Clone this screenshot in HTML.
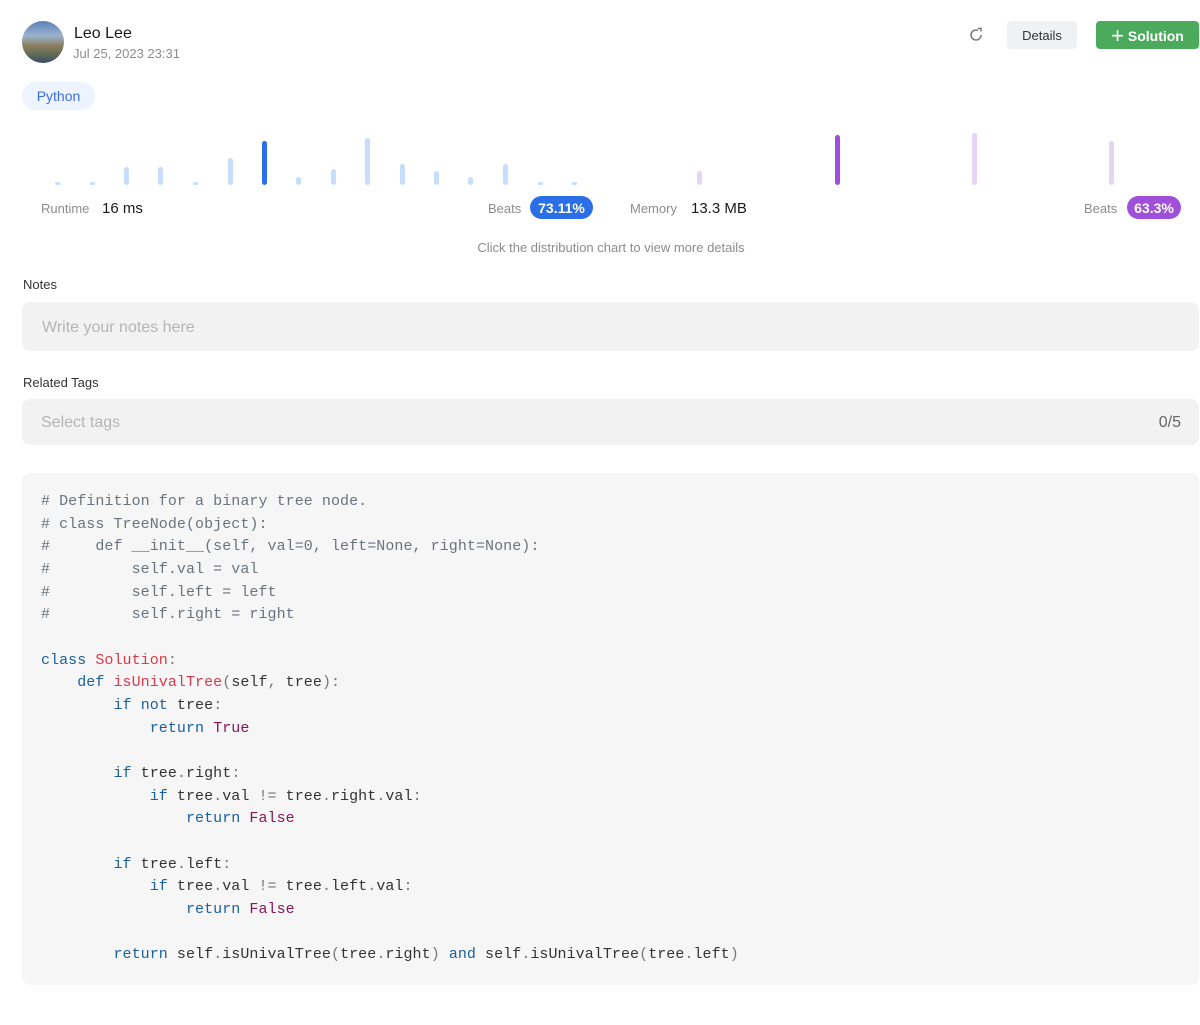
<!DOCTYPE html>
<html><head><meta charset="utf-8"><style>
*{margin:0;padding:0;box-sizing:border-box}
body{width:1200px;height:1025px;background:#fff;font-family:"Liberation Sans",sans-serif;position:relative;overflow:hidden;color:#262626}
.a{position:absolute}
.bar{position:absolute;width:5px;border-radius:3px;bottom:840px}
.rl{background:#c6ddfb}.rd{background:#2b6fe8}.ml{background:#e6d4f5}.md{background:#9f4fd9}
pre{font-family:"Liberation Mono",monospace;font-size:15px;line-height:22.65px;color:#333;letter-spacing:0.06px}
.c{color:#6a737d}.k{color:#1a5f9e}.f{color:#d73a49}.t{color:#8a1657}.p{color:#777}
</style></head><body>
<div class="a" style="left:22px;top:21px;width:42px;height:42px;border-radius:50%;background:linear-gradient(180deg,#5a7fb5 0%,#9bb2cf 35%,#8a7d5c 60%,#5e6b55 80%,#3a4a6a 100%)"></div>
<div class="a" style="left:74px;top:25px;font-size:16px;color:#1a1a1a">Leo Lee</div>
<div class="a" style="left:73px;top:46px;font-size:13px;color:#8c8c8c">Jul 25, 2023 23:31</div>
<div class="a" style="left:22px;top:82px;width:73px;height:28px;border-radius:14px;background:#edf3ff;color:#3b6de6;font-size:14px;line-height:28px;text-align:center">Python</div>
<svg class="a" style="left:968px;top:27px" width="16" height="16" viewBox="0 0 16 16" fill="none" stroke="#777" stroke-width="1.5"><path d="M13 8A5 5 0 1 1 10 3.4"/><path d="M10 1.5h3v3"/></svg>
<div class="a" style="left:1007px;top:21px;width:70px;height:28px;border-radius:4px;background:#f0f1f3;font-size:13px;line-height:29px;text-align:center;color:#333">Details</div>
<div class="a" style="left:1096px;top:21px;width:103px;height:28px;border-radius:4px;background:#4caa5c;font-size:14px;line-height:29px;text-align:center;color:#fff;font-weight:bold"><span style="font-size:22px;font-weight:normal;vertical-align:-2px">+</span> Solution</div>

<div class="bar rl" style="left:55px;height:3px"></div>
<div class="bar rl" style="left:90px;height:3px"></div>
<div class="bar rl" style="left:124px;height:18px"></div>
<div class="bar rl" style="left:158px;height:18px"></div>
<div class="bar rl" style="left:193px;height:3px"></div>
<div class="bar rl" style="left:228px;height:27px"></div>
<div class="bar rd" style="left:262px;height:44px"></div>
<div class="bar rl" style="left:296px;height:8px"></div>
<div class="bar rl" style="left:331px;height:16px"></div>
<div class="bar rl" style="left:365px;height:47px"></div>
<div class="bar rl" style="left:400px;height:21px"></div>
<div class="bar rl" style="left:434px;height:14px"></div>
<div class="bar rl" style="left:468px;height:8px"></div>
<div class="bar rl" style="left:503px;height:21px"></div>
<div class="bar rl" style="left:538px;height:3px"></div>
<div class="bar rl" style="left:572px;height:3px"></div>
<div class="bar ml" style="left:697px;height:14px"></div>
<div class="bar md" style="left:835px;height:50px"></div>
<div class="bar ml" style="left:972px;height:52px"></div>
<div class="bar ml" style="left:1109px;height:44px"></div>

<div class="a" style="left:41px;top:201px;font-size:13px;color:#8c8c8c">Runtime</div>
<div class="a" style="left:102px;top:200px;font-size:15px;color:#1a1a1a">16 ms</div>
<div class="a" style="left:488px;top:201px;font-size:13px;color:#8c8c8c">Beats</div>
<div class="a" style="left:530px;top:196px;width:63px;height:23px;border-radius:12px;background:#2b6fe8;color:#fff;font-size:14px;line-height:24px;text-align:center;font-weight:bold">73.11%</div>
<div class="a" style="left:630px;top:201px;font-size:13px;color:#8c8c8c">Memory</div>
<div class="a" style="left:691px;top:200px;font-size:15px;color:#1a1a1a">13.3 MB</div>
<div class="a" style="left:1084px;top:201px;font-size:13px;color:#8c8c8c">Beats</div>
<div class="a" style="left:1127px;top:196px;width:54px;height:23px;border-radius:12px;background:#9f4fd9;color:#fff;font-size:14px;line-height:24px;text-align:center;font-weight:bold">63.3%</div>
<div class="a" style="left:0;width:1222px;top:240px;font-size:13px;color:#8c8c8c;text-align:center">Click the distribution chart to view more details</div>

<div class="a" style="left:23px;top:277px;font-size:13px;color:#333">Notes</div>
<div class="a" style="left:22px;top:302px;width:1177px;height:49px;border-radius:8px;background:#f2f2f3;font-size:16px;color:#b5b5b5;line-height:51px;padding-left:20px">Write your notes here</div>
<div class="a" style="left:23px;top:375px;font-size:13px;color:#333">Related Tags</div>
<div class="a" style="left:22px;top:399px;width:1177px;height:46px;border-radius:8px;background:#f2f2f3;font-size:16px;color:#b5b5b5;line-height:48px;padding-left:19px">Select tags<span style="position:absolute;right:18px;color:#666">0/5</span></div>

<div class="a" style="left:22px;top:473px;width:1177px;height:512px;border-radius:8px;background:#f6f6f6"></div>
<pre class="a" style="left:41px;top:491px"><span class="c"># Definition for a binary tree node.
# class TreeNode(object):
#     def __init__(self, val=0, left=None, right=None):
#         self.val = val
#         self.left = left
#         self.right = right</span>

<span class="k">class</span> <span class="f">Solution</span><span class="p">:</span>
    <span class="k">def</span> <span class="f">isUnivalTree</span><span class="p">(</span>self<span class="p">,</span> tree<span class="p">):</span>
        <span class="k">if</span> <span class="k">not</span> tree<span class="p">:</span>
            <span class="k">return</span> <span class="t">True</span>

        <span class="k">if</span> tree<span class="p">.</span>right<span class="p">:</span>
            <span class="k">if</span> tree<span class="p">.</span>val <span class="p">!=</span> tree<span class="p">.</span>right<span class="p">.</span>val<span class="p">:</span>
                <span class="k">return</span> <span class="t">False</span>

        <span class="k">if</span> tree<span class="p">.</span>left<span class="p">:</span>
            <span class="k">if</span> tree<span class="p">.</span>val <span class="p">!=</span> tree<span class="p">.</span>left<span class="p">.</span>val<span class="p">:</span>
                <span class="k">return</span> <span class="t">False</span>

        <span class="k">return</span> self<span class="p">.</span>isUnivalTree<span class="p">(</span>tree<span class="p">.</span>right<span class="p">)</span> <span class="k">and</span> self<span class="p">.</span>isUnivalTree<span class="p">(</span>tree<span class="p">.</span>left<span class="p">)</span></pre>
</body></html>
